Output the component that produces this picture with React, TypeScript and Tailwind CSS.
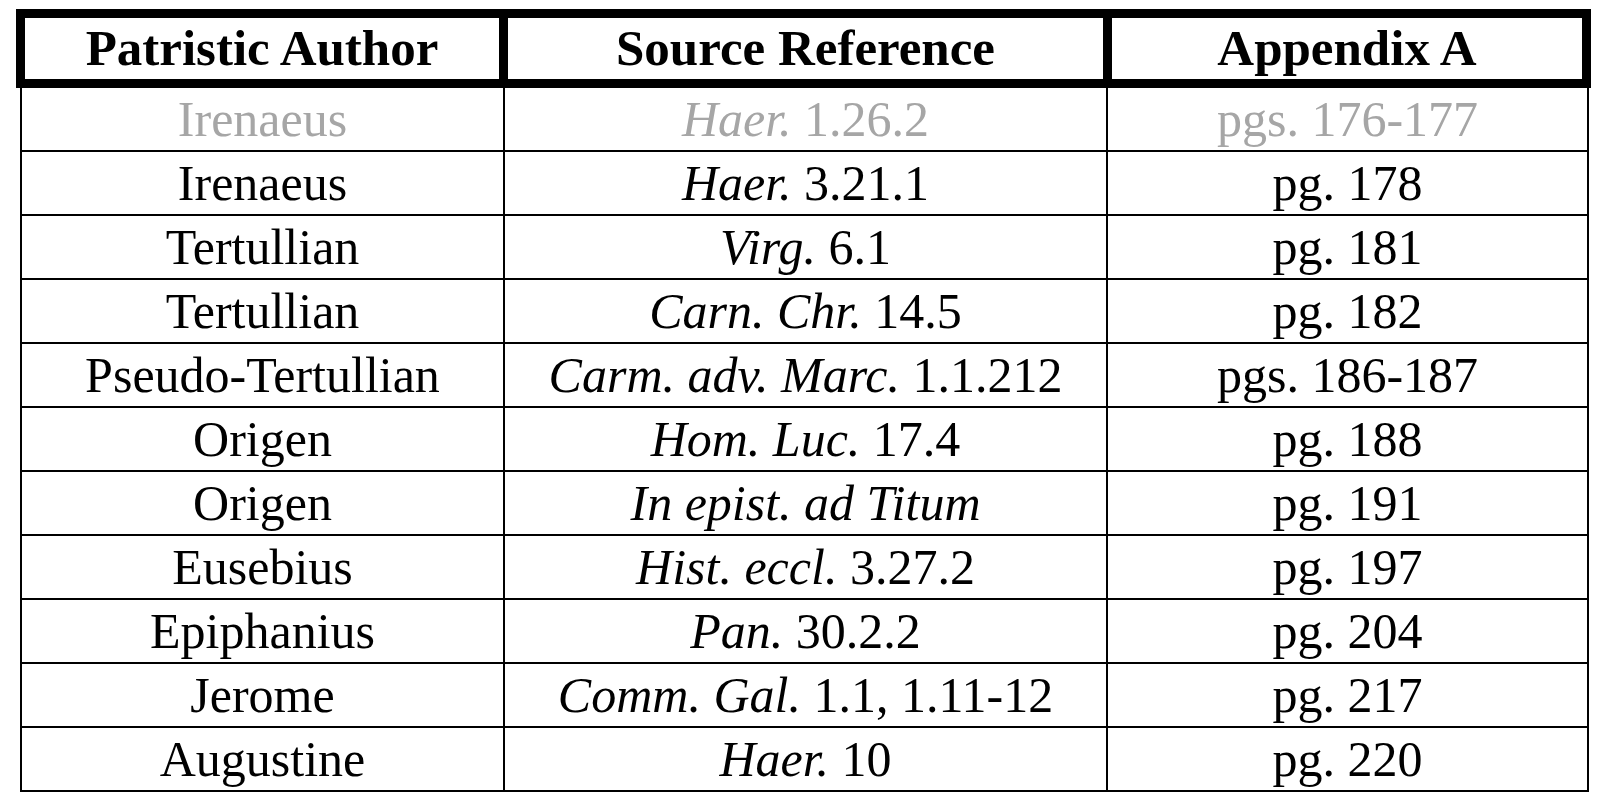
type Row = {
  author: string;
  work: string;
  ref: string;
  page: string;
  faded?: boolean;
};

const rows: Row[] = [
  { author: "Irenaeus", work: "Haer.", ref: "1.26.2", page: "pgs. 176-177", faded: true },
  { author: "Irenaeus", work: "Haer.", ref: "3.21.1", page: "pg. 178" },
  { author: "Tertullian", work: "Virg.", ref: "6.1", page: "pg. 181" },
  { author: "Tertullian", work: "Carn. Chr.", ref: "14.5", page: "pg. 182" },
  { author: "Pseudo-Tertullian", work: "Carm. adv. Marc.", ref: "1.1.212", page: "pgs. 186-187" },
  { author: "Origen", work: "Hom. Luc.", ref: "17.4", page: "pg. 188" },
  { author: "Origen", work: "In epist. ad Titum", ref: "", page: "pg. 191" },
  { author: "Eusebius", work: "Hist. eccl.", ref: "3.27.2", page: "pg. 197" },
  { author: "Epiphanius", work: "Pan.", ref: "30.2.2", page: "pg. 204" },
  { author: "Jerome", work: "Comm. Gal.", ref: "1.1, 1.11-12", page: "pg. 217" },
  { author: "Augustine", work: "Haer.", ref: "10", page: "pg. 220" },
];

const cell = "flex h-[62px] items-center justify-center bg-white whitespace-nowrap";

export default function App() {
  return (
    <div className="min-h-screen bg-white pl-[16px] pt-[9px] font-['Liberation_Serif','Times_New_Roman',serif] text-[50px] leading-none text-black">
      {/* header row: thick 9px rules */}
      <div className="grid w-[1575px] grid-cols-[474px_595px_470px] gap-[9px] border-[9px] border-black bg-black text-[51px]">
        <div className="flex h-[61px] items-center justify-center bg-white font-bold">Patristic Author</div>
        <div className="flex h-[61px] items-center justify-center bg-white font-bold">Source Reference</div>
        <div className="flex h-[61px] items-center justify-center bg-white font-bold">Appendix A</div>
      </div>

      {/* body rows: thin 2px rules */}
      <div className="ml-[4px] grid w-[1569px] grid-cols-[481px_601px_479px] gap-[2px] border-x-2 border-b-2 border-black bg-black">
        {rows.map((r, i) => (
          <div key={i} className="contents">
            <div className={`${cell} ${r.faded ? "text-[#a6a6a6]" : ""}`}>{r.author}</div>
            <div className={`${cell} ${r.faded ? "text-[#a6a6a6]" : ""}`}>
              <span className="italic">{r.work}</span>
              {r.ref && <span>&nbsp;{r.ref}</span>}
            </div>
            <div className={`${cell} ${r.faded ? "text-[#a6a6a6]" : ""}`}>{r.page}</div>
          </div>
        ))}
      </div>
    </div>
  );
}
